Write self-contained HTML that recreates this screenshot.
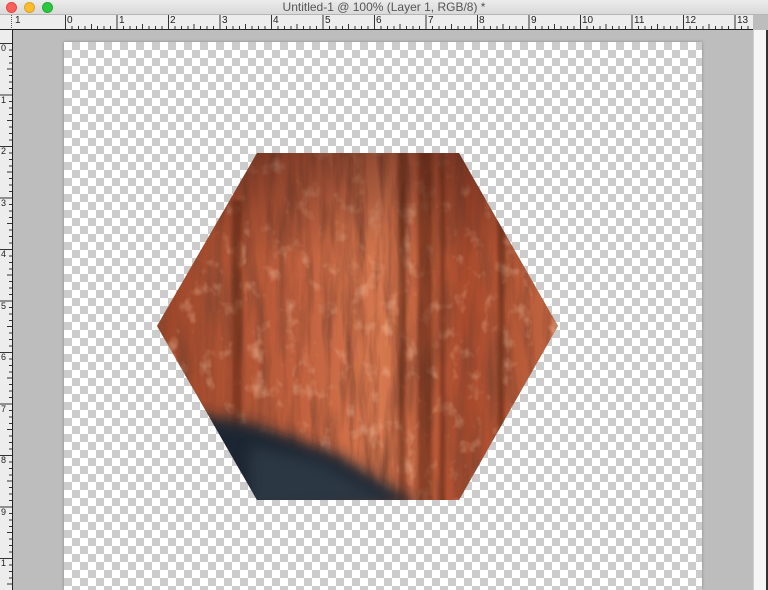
<!DOCTYPE html>
<html><head><meta charset="utf-8"><style>
*{margin:0;padding:0;box-sizing:border-box}
html,body{width:768px;height:590px;overflow:hidden}
body{background:#bdbdbd;font-family:"Liberation Sans",sans-serif;position:relative}
#title{position:absolute;left:0;top:0;width:768px;height:15px;background:linear-gradient(#ececec,#d9d9d9);border-bottom:1px solid #b5b5b5;text-align:center;font-size:12px;line-height:14px;color:#555}
.dot{position:absolute;top:2px;width:11px;height:11px;border-radius:50%}
#hr{position:absolute;left:12px;top:15px;width:741px;height:15px;background:#ededed;border-bottom:1px solid #222;
background-image:
repeating-linear-gradient(90deg,#333 0 1px,transparent 1px 51.5px),
repeating-linear-gradient(90deg,#333 0 1px,transparent 1px 25.75px),
repeating-linear-gradient(90deg,#333 0 1px,transparent 1px 6.4375px);
background-size:100% 14px,100% 5px,100% 3px;background-repeat:no-repeat;background-position:53px 0,53px 9px,53px 11px}
#vr{position:absolute;left:0;top:30px;width:13px;height:560px;background:#ededed;border-right:1px solid #222;
background-image:
repeating-linear-gradient(180deg,#333 0 1px,transparent 1px 51.5px),
repeating-linear-gradient(180deg,#333 0 1px,transparent 1px 25.75px),
repeating-linear-gradient(180deg,#333 0 1px,transparent 1px 6.4375px);
background-size:12px 100%,5px 100%,3px 100%;background-repeat:no-repeat;background-position:0 13px,7px 13px,9px 13px}
.hn{position:absolute;top:15px;font-size:10px;color:#222;line-height:11px}
.vn{position:absolute;left:1px;font-size:9px;color:#222;line-height:9px}
#corner{position:absolute;left:0;top:15px;width:12px;height:15px;background:#ededed;border-right:1px dotted #555;border-bottom:1px solid #222}
#canvas{position:absolute;left:64px;top:42px;width:638px;height:548px;background-color:#fff;
background-image:linear-gradient(45deg,#ccc 25%,transparent 25%,transparent 75%,#ccc 75%),linear-gradient(45deg,#ccc 25%,transparent 25%,transparent 75%,#ccc 75%);
background-size:16px 16px;background-position:0 0,8px 8px;box-shadow:0 0 3px rgba(0,0,0,.3)}
#sb{position:absolute;left:753px;top:30px;width:13px;height:560px;background:#f6f6f6;border-left:1px solid #d0d0d0}
#edge{position:absolute;left:766px;top:30px;width:2px;height:560px;background:#333}
</style></head><body>
<div id="title">Untitled-1 @ 100% (Layer 1, RGB/8) *</div>
<div class="dot" style="left:6px;background:#fc5f57;border:1px solid #de4a42"></div>
<div class="dot" style="left:24px;background:#fdbc2e;border:1px solid #dea023"></div>
<div class="dot" style="left:42px;background:#29c840;border:1px solid #1eab2e"></div>
<div id="hr"></div><div id="corner"></div>
<div class="hn" style="left:15px">1</div>
<div class="hn" style="left:67px">0</div>
<div class="hn" style="left:119px">1</div>
<div class="hn" style="left:170px">2</div>
<div class="hn" style="left:222px">3</div>
<div class="hn" style="left:273px">4</div>
<div class="hn" style="left:325px">5</div>
<div class="hn" style="left:376px">6</div>
<div class="hn" style="left:428px">7</div>
<div class="hn" style="left:479px">8</div>
<div class="hn" style="left:531px">9</div>
<div class="hn" style="left:582px">10</div>
<div class="hn" style="left:634px">11</div>
<div class="hn" style="left:685px">12</div>
<div class="hn" style="left:737px">13</div>
<div id="vr"></div>
<div class="vn" style="top:44px">0</div>
<div class="vn" style="top:96px">1</div>
<div class="vn" style="top:147px">2</div>
<div class="vn" style="top:199px">3</div>
<div class="vn" style="top:250px">4</div>
<div class="vn" style="top:302px">5</div>
<div class="vn" style="top:353px">6</div>
<div class="vn" style="top:405px">7</div>
<div class="vn" style="top:456px">8</div>
<div class="vn" style="top:508px">9</div>
<div class="vn" style="top:559px">1</div>
<div id="canvas"></div>
<div id="sb"></div><div id="edge"></div>
<svg style="position:absolute;left:0;top:0" width="768" height="590">
<defs>
<clipPath id="hx"><polygon points="257,153 459,153 558,326 459,500 257,500 157,326"/></clipPath>
<linearGradient id="base" x1="0" y1="0" x2="1" y2="0">
<stop offset="0" stop-color="#9a4428"/><stop offset=".35" stop-color="#c0603e"/>
<stop offset=".55" stop-color="#d6784f"/><stop offset=".75" stop-color="#a8492c"/><stop offset="1" stop-color="#c66a44"/></linearGradient>
<linearGradient id="dk" x1="0" y1="0" x2="0" y2="1"><stop offset="0" stop-color="#3a1410" stop-opacity=".45"/><stop offset=".3" stop-color="#3a1410" stop-opacity="0"/></linearGradient>
<filter id="bl"><feGaussianBlur stdDeviation="7"/></filter>
<filter id="b2"><feGaussianBlur stdDeviation="1.5"/></filter>
<filter id="tx" x="0" y="0" width="100%" height="100%">
<feTurbulence type="fractalNoise" baseFrequency="0.09 0.012" numOctaves="4" seed="3"/>
<feColorMatrix values="0 0 0 0 0.22  0 0 0 0 0.06  0 0 0 0 0.03  0 0 0 -2.2 1.35"/>
</filter>
<filter id="tx2" x="0" y="0" width="100%" height="100%">
<feTurbulence type="fractalNoise" baseFrequency="0.06 0.05" numOctaves="3" seed="9"/>
<feColorMatrix values="0 0 0 0 0.95  0 0 0 0 0.6  0 0 0 0 0.4  0 0 0 2.5 -1.4"/>
</filter>
</defs>
<g clip-path="url(#hx)">
<rect x="150" y="150" width="420" height="360" fill="url(#base)"/>
<rect x="150" y="150" width="420" height="360" filter="url(#tx)" opacity=".75"/>
<rect x="150" y="150" width="420" height="360" filter="url(#tx2)" opacity=".5"/>
<rect x="150" y="150" width="420" height="360" fill="url(#dk)"/>
<g filter="url(#b2)" fill="#4a1a10" opacity=".45">
<rect x="232" y="200" width="10" height="300"/>
<rect x="398" y="150" width="8" height="360"/><rect x="418" y="150" width="14" height="360"/>
<rect x="440" y="150" width="5" height="360"/><rect x="498" y="200" width="6" height="300"/>
</g>
<polygon filter="url(#bl)" points="190,412 260,425 340,455 420,505 160,520" fill="#1f2630"/>
<polygon filter="url(#bl)" points="250,445 320,462 390,500 250,510" fill="#3e4856" opacity=".5"/>
</g>
</svg>
</body></html>
